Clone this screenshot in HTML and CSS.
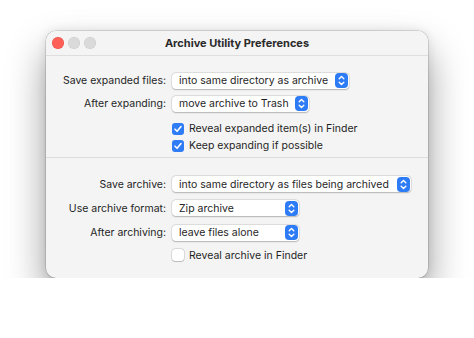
FILE: index.html
```html
<!DOCTYPE html>
<html>
<head>
<meta charset="utf-8">
<link rel="stylesheet" href="styles.css">
</head>
<body>
<div class="window">
  <div class="titlebar">
    <div class="lights">
      <span class="light red"></span>
      <span class="light gray"></span>
      <span class="light gray"></span>
    </div>
    <div class="title">Archive Utility Preferences</div>
  </div>
  <div class="section s1">
    <div class="row pop-row">
      <div class="label">Save expanded files:</div>
      <div class="popup w-exp">
        <span class="ptext">into same directory as archive</span>
        <span class="stepper"><svg viewBox="0 0 13 15" width="13" height="15"><path d="M4.2 5.8 L6.5 3.5 L8.8 5.8 M4.2 9.2 L6.5 11.5 L8.8 9.2" fill="none" stroke="#fff" stroke-width="1.4" stroke-linecap="round" stroke-linejoin="round"/></svg></span>
      </div>
    </div>
    <div class="row pop-row">
      <div class="label">After expanding:</div>
      <div class="popup w-trash">
        <span class="ptext">move archive to Trash</span>
        <span class="stepper"><svg viewBox="0 0 13 15" width="13" height="15"><path d="M4.2 5.8 L6.5 3.5 L8.8 5.8 M4.2 9.2 L6.5 11.5 L8.8 9.2" fill="none" stroke="#fff" stroke-width="1.4" stroke-linecap="round" stroke-linejoin="round"/></svg></span>
      </div>
    </div>
    <div class="row chk-row first-chk">
      <div class="label"></div>
      <label class="check">
        <span class="box on"><svg viewBox="0 0 12 12" width="12" height="12"><path d="M3 6.2 L5.1 8.3 L9 3.6" fill="none" stroke="#fff" stroke-width="1.6" stroke-linecap="round" stroke-linejoin="round"/></svg></span>
        <span>Reveal expanded item(s) in Finder</span>
      </label>
    </div>
    <div class="row chk-row">
      <div class="label"></div>
      <label class="check">
        <span class="box on"><svg viewBox="0 0 12 12" width="12" height="12"><path d="M3 6.2 L5.1 8.3 L9 3.6" fill="none" stroke="#fff" stroke-width="1.6" stroke-linecap="round" stroke-linejoin="round"/></svg></span>
        <span>Keep expanding if possible</span>
      </label>
    </div>
  </div>
  <div class="separator"></div>
  <div class="section s2">
    <div class="row pop-row">
      <div class="label">Save archive:</div>
      <div class="popup w-save">
        <span class="ptext">into same directory as files being archived</span>
        <span class="stepper"><svg viewBox="0 0 13 15" width="13" height="15"><path d="M4.2 5.8 L6.5 3.5 L8.8 5.8 M4.2 9.2 L6.5 11.5 L8.8 9.2" fill="none" stroke="#fff" stroke-width="1.4" stroke-linecap="round" stroke-linejoin="round"/></svg></span>
      </div>
    </div>
    <div class="row pop-row">
      <div class="label">Use archive format:</div>
      <div class="popup w-fmt">
        <span class="ptext">Zip archive</span>
        <span class="stepper"><svg viewBox="0 0 13 15" width="13" height="15"><path d="M4.2 5.8 L6.5 3.5 L8.8 5.8 M4.2 9.2 L6.5 11.5 L8.8 9.2" fill="none" stroke="#fff" stroke-width="1.4" stroke-linecap="round" stroke-linejoin="round"/></svg></span>
      </div>
    </div>
    <div class="row pop-row tall">
      <div class="label">After archiving:</div>
      <div class="popup w-fmt">
        <span class="ptext">leave files alone</span>
        <span class="stepper"><svg viewBox="0 0 13 15" width="13" height="15"><path d="M4.2 5.8 L6.5 3.5 L8.8 5.8 M4.2 9.2 L6.5 11.5 L8.8 9.2" fill="none" stroke="#fff" stroke-width="1.4" stroke-linecap="round" stroke-linejoin="round"/></svg></span>
      </div>
    </div>
    <div class="row chk-row last-chk">
      <div class="label"></div>
      <label class="check">
        <span class="box off"></span>
        <span>Reveal archive in Finder</span>
      </label>
    </div>
  </div>
</div>
</body>
</html>
```
FILE: styles.css
```css
html, body {
  margin: 0;
  background: #ffffff;
}
body {
  padding: 31px 0 0 46px;
  font-family: "Inter", "Liberation Sans", sans-serif;
  font-size: 10.5px;
  color: #1f1f1f;
}
.window {
  width: 382px;
  box-sizing: border-box;
  background: #f4f4f4;
  border-radius: 10px;
  box-shadow: 0 0 0 0.5px rgba(0,0,0,0.22), 0 20px 38px rgba(0,0,0,0.4), 0 0 10px rgba(0,0,0,0.1);
  overflow: hidden;
}
.titlebar {
  height: 24px;
  display: flex;
  align-items: center;
  position: relative;
  border-bottom: 1px solid #dedede;
  background: #f4f4f4;
}
.lights {
  display: flex;
  gap: 4px;
  padding-left: 6px;
}
.light {
  width: 12px;
  height: 12px;
  border-radius: 50%;
  display: block;
}
.light.red { background: #fe5f57; box-shadow: inset 0 0 0 0.5px rgba(200,40,30,0.4); }
.light.gray { background: #dadada; box-shadow: inset 0 0 0 0.5px rgba(0,0,0,0.08); }
.title {
  position: absolute;
  left: 0;
  right: 0;
  top: 0;
  bottom: 0;
  display: flex;
  align-items: center;
  justify-content: center;
  font-weight: 700;
  font-size: 11px;
  color: #2a2a2a;
}
.section {
  display: flex;
  flex-direction: column;
}
.s1 { padding: 13px 0 3px; }
.s2 { padding: 14px 0 14px; }
.separator {
  height: 1px;
  background: #dcdcdc;
}
.row {
  display: flex;
  align-items: center;
}
.pop-row { height: 23px; }
.s2 .pop-row { height: 24px; }
.s2 .pop-row.tall { height: 25px; }
.chk-row { height: 17px; }
.first-chk { margin-top: 5px; }
.last-chk { margin-top: 1px; height: 18px; }
.label {
  width: 120px;
  text-align: right;
  flex: none;
}
.popup {
  margin-left: 6px;
  height: 16px;
  box-sizing: border-box;
  background: #ffffff;
  border-radius: 4px;
  box-shadow: 0 0 0 0.5px rgba(0,0,0,0.12), 0 0.5px 1.5px rgba(0,0,0,0.22);
  display: flex;
  align-items: center;
  justify-content: space-between;
  padding: 0 1px 0 7px;
}
.w-exp { width: 177px; }
.w-trash { width: 137px; }
.w-save { width: 239px; }
.w-fmt { width: 127px; }
.ptext { white-space: nowrap; }
.stepper {
  width: 13px;
  height: 15px;
  border-radius: 4px;
  background: #2d7cf6;
  display: block;
  flex: none;
}
.stepper svg { display: block; }
.check {
  margin-left: 6px;
  display: flex;
  align-items: center;
  gap: 5px;
}
.box {
  width: 12px;
  height: 12px;
  border-radius: 3px;
  box-sizing: border-box;
  display: block;
}
.box svg { display: block; }
.box.on { background: #2f7cf6; }
.box.off {
  background: #ffffff;
  box-shadow: 0 0 0 0.5px rgba(0,0,0,0.2), 0 0.5px 1px rgba(0,0,0,0.15);
}
```
